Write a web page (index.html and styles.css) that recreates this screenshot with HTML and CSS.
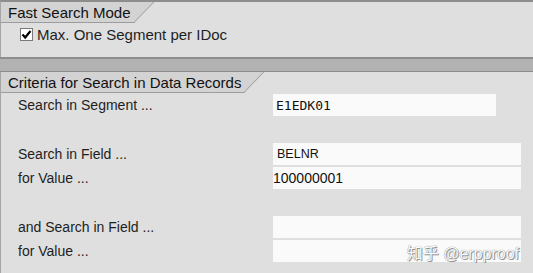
FILE: index.html
```html
<!DOCTYPE html>
<html lang="en">
<head>
    <meta charset="UTF-8">
    <title>IDoc Search</title>
    <link rel="stylesheet" href="styles.css">
</head>
<body>
    <section class="group group-top">
        <div class="tab">Fast Search Mode</div>
        <label class="check-row">
            <span class="checkbox">
                <svg width="11" height="11" viewBox="0 0 11 11"><path d="M1.5 5.5 L4.2 8.5 L9.5 2" fill="none" stroke="#000" stroke-width="2.2"/></svg>
            </span>
            Max. One Segment per IDoc
        </label>
    </section>
    <div class="band"></div>
    <section class="group group-criteria">
        <div class="tab">Criteria for Search in Data Records</div>
        <div class="row first">
            <span class="label">Search in Segment ...</span>
            <span class="field short mono">E1EDK01</span>
        </div>
        <div class="row spaced">
            <span class="label">Search in Field ...</span>
            <span class="field">BELNR</span>
        </div>
        <div class="row">
            <span class="label">for Value ...</span>
            <span class="field digits">100000001</span>
        </div>
        <div class="row spaced">
            <span class="label">and Search in Field ...</span>
            <span class="field"></span>
        </div>
        <div class="row">
            <span class="label">for Value ...</span>
            <span class="field"></span>
        </div>
        <div class="watermark">知乎 @erpproof</div>
    </section>
</body>
</html>
```

FILE: styles.css
```css
body {
    margin: 0;
    font-family: "Liberation Sans", Arial, sans-serif;
    font-size: 15px;
    color: #1e1e1e;
    background-color: #dfdfdf;
    height: 273px;
    overflow: hidden;
}

.group {
    background-color: #dfdfdf;
    border-left: 1px solid #a6a6a6;
}

.group-top {
    border-top: 2px solid #8d8d8d;
    height: 55px;
}

.band {
    height: 12px;
    background-color: #b2b2b2;
    border-top: 2px solid #8d8d8d;
    border-bottom: 1px solid #8d8d8d;
}

.group-criteria {
    position: relative;
    height: 201px;
}

/* tab header with the slanted right edge */
.tab {
    position: relative;
    z-index: 0;
    display: inline-block;
    height: 20px;
    line-height: 21px;
    padding: 0 2px 0 7px;
    background-color: #d3d3d3;
    border-bottom: 1px solid #9c9c9c;
    color: #111;
}

.tab::after {
    content: '';
    position: absolute;
    z-index: -1;
    left: calc(100% - 30px);
    top: 0;
    width: 30px;
    height: 20px;
    background-color: #d3d3d3;
    border-right: 1px solid #9c9c9c;
    border-bottom: 1px solid #9c9c9c;
    transform-origin: bottom left;
    transform: skewX(-44deg);
}

.check-row {
    display: flex;
    align-items: center;
    gap: 4px;
    margin-top: 4px;
    padding-left: 19px;
    height: 14px;
}

.checkbox {
    display: flex;
    align-items: center;
    justify-content: center;
    width: 11px;
    height: 11px;
    background-color: #fff;
    border: 1px solid #7a7a7a;
}

.row {
    display: flex;
    align-items: center;
    height: 22px;
    margin-top: 2px;
    padding-left: 17px;
    font-size: 14px;
}

.row.first {
    margin-top: 1px;
}

.row.spaced {
    margin-top: 27px;
}

.label {
    width: 255px;
}

.field {
    width: 244px;
    height: 22px;
    line-height: 23px;
    padding-left: 4px;
    background-color: #fafafa;
    font-size: 12.5px;
    color: #111;
}

.field.short {
    width: 220px;
}

.field.mono {
    font-family: "DejaVu Sans Mono", monospace;
    font-size: 13px;
    padding-left: 3px;
}

.field.digits {
    padding-left: 0;
    width: 248px;
    font-size: 14px;
}

.watermark {
    position: absolute;
    right: 14px;
    bottom: 9px;
    font-family: "Liberation Sans", "Noto Sans CJK SC", sans-serif;
    font-size: 16px;
    color: #fbfbfb;
    text-shadow: 0 0 1px #6a6a6a, 1px 1px 0 #9a9a9a;
}
```
